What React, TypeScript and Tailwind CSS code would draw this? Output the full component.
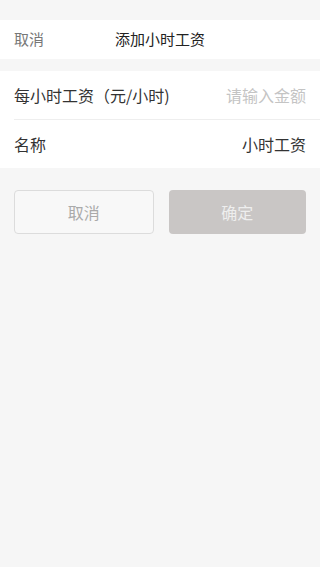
export default function App() {
  return (
    <div
      className="min-h-[567px] bg-[#f6f6f6] pt-5"
      style={{ fontFamily: '"Noto Sans CJK SC", "Noto Sans", sans-serif' }}
    >
      {/* Header */}
      <div className="relative flex h-[39px] items-center bg-white px-[14px]">
        <span className="text-[15px] text-[#777]">取消</span>
        <span className="absolute left-1/2 -translate-x-1/2 text-[15px] text-[#222]">
          添加小时工资
        </span>
      </div>

      {/* Form */}
      <div className="mt-3 bg-white pl-[14px]">
        <div className="flex h-[49px] items-center justify-between border-b border-[#eeeeee] pr-[14px]">
          <span className="text-[16px] text-[#333]">每小时工资（元/小时)</span>
          <span className="text-[16px] text-[#c4c4c4]">请输入金额</span>
        </div>
        <div className="flex h-[48px] items-center justify-between pr-[14px]">
          <span className="text-[16px] text-[#333]">名称</span>
          <span className="text-[16px] text-[#333]">小时工资</span>
        </div>
      </div>

      {/* Buttons */}
      <div className="mt-[22px] flex gap-[15px] px-[14px]">
        <button className="flex h-[44px] flex-1 items-center justify-center rounded-[4px] border border-[#dcdcdc] bg-[#f8f8f8] text-[16px] text-[#aaa]">
          取消
        </button>
        <button className="flex h-[44px] flex-1 items-center justify-center rounded-[4px] bg-[#c9c6c5] text-[16px] text-[#eeeeee]">
          确定
        </button>
      </div>
    </div>
  );
}
